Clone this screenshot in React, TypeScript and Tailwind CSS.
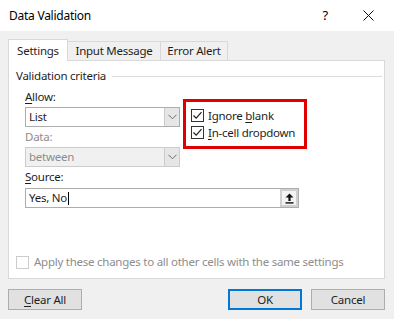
import React from 'react';

const font = { fontFamily: '"Noto Sans", "Open Sans", sans-serif' };

const Chevron = () => (
  <svg width="9" height="6" viewBox="0 0 9 6" fill="none">
    <path d="M0.5 0.8 L4.5 4.8 L8.5 0.8" stroke="#6b6b6b" strokeWidth="1" />
  </svg>
);

const Check = () => (
  <svg width="11" height="11" viewBox="0 0 11 11" fill="none">
    <path d="M1.5 5.5 L4.2 8.2 L9.5 2.2" stroke="#1f1f1f" strokeWidth="1.2" />
  </svg>
);

const Select = ({ value, disabled }: { value: string; disabled?: boolean }) => (
  <div
    className={`flex h-[20px] w-[155px] items-stretch border ${
      disabled ? 'border-[#cccccc] bg-[#f0f0f0] text-[#8d8d8d]' : 'border-[#adadad] bg-white text-[#1e1e1e]'
    }`}
  >
    <div className="flex flex-1 items-center pl-[3px] leading-none">{value}</div>
    <div className="flex w-[15px] items-center justify-center border-l border-[#cccccc] bg-[#e6e6e6]">
      <Chevron />
    </div>
  </div>
);

const CheckRow = ({ children }: { children: React.ReactNode }) => (
  <div className="flex h-[16px] items-center gap-[4px]">
    <div className="flex h-[13px] w-[13px] items-center justify-center border border-[#333333] bg-white">
      <Check />
    </div>
    <span className="text-[#1e1e1e]">{children}</span>
  </div>
);

const App = () => {
  return (
    <div
      className="h-[319px] w-[394px] overflow-hidden bg-[#f0f0f0] text-[11.5px] tracking-[-0.25px] text-[#1e1e1e]"
      style={font}
    >
      {/* title bar */}
      <div className="flex h-[31px] items-center bg-white pl-[9px]">
        <span className="text-[12px] text-black">Data Validation</span>
        <span className="ml-auto mr-[35px] text-[13px] text-black">?</span>
        <svg className="mr-[20px]" width="11" height="11" viewBox="0 0 11 11">
          <path d="M0.5 0.5 L10.5 10.5 M10.5 0.5 L0.5 10.5" stroke="#111" strokeWidth="1" />
        </svg>
      </div>

      <div className="px-[8px] pt-[8px]">
        {/* tabs */}
        <div className="flex h-[21px] items-end">
          <div className="relative z-10 -mb-px flex h-[22px] w-[60px] items-center justify-center border border-b-0 border-[#d9d9d9] bg-white">
            Settings
          </div>
          <div className="flex h-[19px] w-[93px] items-center justify-center border border-b-0 border-l-0 border-[#d9d9d9] bg-[#f0f0f0]">
            Input Message
          </div>
          <div className="flex h-[19px] w-[67px] items-center justify-center border border-b-0 border-l-0 border-[#d9d9d9] bg-[#f0f0f0]">
            Error Alert
          </div>
        </div>

        {/* panel */}
        <div className="h-[219px] w-[377px] border border-[#d9d9d9] bg-white">
          <div className="mt-[7px] flex h-[16px] items-center pl-[7px] pr-[2px]">
            <span>Validation criteria</span>
            <div className="ml-[6px] h-px flex-1 bg-[#dcdcdc]" />
          </div>

          <div className="mt-[5px] flex pl-[16px]">
            <div className="flex flex-col">
              <div className="h-[16px] leading-[16px]">
                <span className="underline underline-offset-2">A</span>llow:
              </div>
              <div className="mt-[2px]">
                <Select value="List" />
              </div>
              <div className="mt-[2px] h-[16px] leading-[16px] text-[#8d8d8d]">Data:</div>
              <div className="mt-[2px]">
                <Select value="between" disabled />
              </div>
            </div>

            <div className="ml-[3px] mt-[10px] flex h-[50px] w-[124px] flex-col justify-center gap-[1px] border-[3px] border-[#e00000] pl-[5px]">
              <CheckRow>
                Ignore <span className="underline underline-offset-2">b</span>lank
              </CheckRow>
              <CheckRow>
                <span className="underline underline-offset-2">I</span>n-cell dropdown
              </CheckRow>
            </div>
          </div>

          <div className="mt-[2px] h-[16px] pl-[16px] leading-[16px]">
            <span className="underline underline-offset-2">S</span>ource:
          </div>
          <div className="ml-[16px] mt-[3px] flex h-[20px] w-[274px] items-stretch border border-[#adadad]">
            <div className="flex flex-1 items-center pl-[3px]">
              Yes, No<span className="ml-px inline-block h-[13px] w-px bg-black" />
            </div>
            <div className="flex w-[18px] items-center justify-center border-[2px] border-[#d0d0d0] bg-[#f3f3f3]">
              <svg width="9" height="11" viewBox="0 0 9 11">
                <path d="M4.5 0.5 L8.5 4.5 L5.6 4.5 L5.6 8 L3.4 8 L3.4 4.5 L0.5 4.5 Z" fill="#111" />
                <rect x="0.5" y="9.2" width="8" height="1.4" fill="#111" />
              </svg>
            </div>
          </div>

          <div className="mt-[46px] flex h-[16px] items-center pl-[7px] text-[#8d8d8d]">
            <div className="mr-[5px] h-[13px] w-[13px] border border-[#cccccc] bg-white" />
            Apply these changes to all other cells with the same settings
          </div>
        </div>

        {/* buttons */}
        <div className="mt-[10px] flex">
          <div className="flex h-[21px] w-[74px] items-center justify-center border border-[#adadad] bg-[#e1e1e1]">
            <span>
              <span className="underline underline-offset-2">C</span>lear All
            </span>
          </div>
          <div className="ml-auto flex h-[21px] w-[74px] items-center justify-center border-2 border-[#0078d7] bg-[#e1e1e1]">
            OK
          </div>
          <div className="ml-[9px] mr-[1px] flex h-[21px] w-[74px] items-center justify-center border border-[#adadad] bg-[#e1e1e1]">
            Cancel
          </div>
        </div>
      </div>
    </div>
  );
};

export default App;
